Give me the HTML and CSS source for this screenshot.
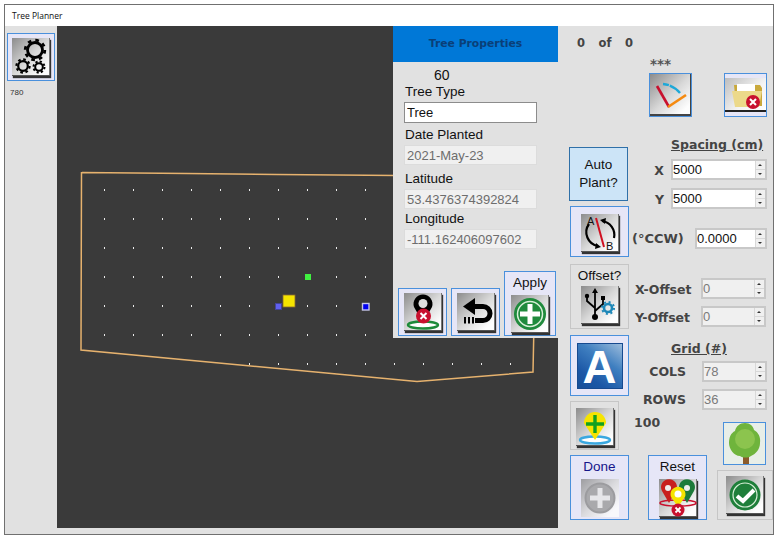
FILE: index.html
```html
<!DOCTYPE html>
<html lang="en">
<head>
<meta charset="utf-8">
<title>Tree Planner</title>
<link rel="stylesheet" href="styles.css">
</head>
<body>
<div class="window">
  <div class="titlebar">Tree Planner</div>
  <div class="main">
    <aside class="sidebar">
      <button class="btn btn-blue btn-gear"><span class="bevel">
        <svg viewBox="0 0 38 38"><g fill="none" stroke="#000"><circle cx="23" cy="12" r="7.500" stroke-width="2.800"/><circle cx="23" cy="12" r="9.800" stroke-width="2.800" stroke-dasharray="3.600 4.100"/><circle cx="11" cy="28" r="4.800" stroke-width="2.200"/><circle cx="11" cy="28" r="6.600" stroke-width="2.200" stroke-dasharray="2.600 2.580"/><circle cx="27" cy="29" r="3.800" stroke-width="2"/><circle cx="27" cy="29" r="5.500" stroke-width="2" stroke-dasharray="2.200 2.120"/></g></svg>
      </span></button>
      <div class="count">780</div>
    </aside>

    <section class="canvas">
      <svg class="map" viewBox="0 0 501 502">
        <polyline class="boundary" points="25,146.500 130,147.500 220,148.500 400,150 480,151 476,346 476,346 360,355.500 24,324 24.500,146"/>
        <g class="trees">
          <path d="M47 164h1M76 164h1M105 164h1M134 164h1M163 164h1M192 164h1M221 164h1M250 164h1M279 164h1M308 164h1"/>
          <path d="M47 193h1M76 193h1M105 193h1M134 193h1M163 193h1M192 193h1M221 193h1M250 193h1M279 193h1M308 193h1"/>
          <path d="M47 222h1M76 222h1M105 222h1M134 222h1M163 222h1M192 222h1M221 222h1M250 222h1M279 222h1M308 222h1"/>
          <path d="M47 251h1M76 251h1M105 251h1M134 251h1M163 251h1M192 251h1M221 251h1M279 251h1M308 251h1"/>
          <path d="M47 280h1M76 280h1M105 280h1M134 280h1M163 280h1M192 280h1M250 280h1M279 280h1"/>
          <path d="M47 309h1M76 309h1M105 309h1M134 309h1M163 309h1M192 309h1M221 309h1M250 309h1M279 309h1M308 309h1"/>
          <path d="M192 338h1M221 338h1M250 338h1M279 338h1M308 338h1M337 338h1M366 338h1M395 338h1M424 338h1M453 338h1"/>
        </g>
        <rect x="226" y="269" width="12" height="12" fill="#f5e400" stroke="#8a6a30" stroke-width=".8"/>
        <rect x="218.500" y="277.500" width="6" height="6" fill="#6060f0" stroke="#44449a"/>
        <rect x="248" y="248" width="6" height="6" fill="#40f040"/>
        <rect x="305.500" y="277.500" width="6.500" height="6.500" fill="#0000f0" stroke="#c4c4e8" stroke-width="1.400"/>
      </svg>

      <div class="props">
        <h2 class="props-head">Tree Properties</h2>
        <div class="props-num">60</div>
        <label class="lbl lbl-type">Tree Type</label>
        <input class="txt" value="Tree">
        <label class="lbl lbl-date">Date Planted</label>
        <input class="txt off" value="2021-May-23" disabled>
        <label class="lbl lbl-lat">Latitude</label>
        <input class="txt off" value="53.4376374392824" disabled>
        <label class="lbl lbl-lon">Longitude</label>
        <input class="txt off" value="-111.162406097602" disabled>
        <div class="props-actions">
          <button class="btn btn-blue btn-49"><span class="bevel">
            <svg viewBox="0 0 38 38"><ellipse cx="19" cy="32" rx="15" ry="3.500" fill="#fff" stroke="#1d8a3a" stroke-width="2.400"/><path d="M19 30 10 14a9.500 9.500 0 1 1 18 0z" fill="#000"/><circle cx="19" cy="10.500" r="4.500" fill="#ddd"/><circle cx="19.500" cy="23" r="7.500" fill="#c8102e"/><path d="m16.500 20 6 6m0-6-6 6" stroke="#fff" stroke-width="2"/></svg>
          </span></button>
          <button class="btn btn-blue btn-49"><span class="bevel">
            <svg viewBox="0 0 38 38"><path d="M16 13.500h10a7 7 0 0 1 0 14H18" fill="none" stroke="#000" stroke-width="5"/><path d="M6 13.500 18 5v17z" fill="#000"/><path d="M7 24h2v6.500H7zM11 24h2v6.500h-2zM15 24h2v6.500h-2z" fill="#000"/></svg>
          </span></button>
          <button class="btn btn-blue btn-apply"><span class="cap">Apply</span><span class="bevel">
            <svg viewBox="0 0 38 38"><circle cx="19" cy="19" r="16" fill="#1f8a3c"/><circle cx="19" cy="19" r="12.500" fill="none" stroke="#d8efd8" stroke-width="1.500"/><path d="M19 9v20M9 19h20" stroke="#fff" stroke-width="5"/></svg>
          </span></button>
        </div>
      </div>
    </section>

    <section class="panel">
      <div class="col-btns">
        <div class="counter"><span>0</span><span class="of">of</span><span>0</span></div>
        <button class="btn btn-auto">Auto<br>Plant?</button>
        <button class="btn btn-blue btn-ab"><span class="bevel">
          <svg viewBox="0 0 38 38"><path d="M15 4 23 33" stroke="#d01020" stroke-width="2"/><path d="M21 7a14 14 0 0 1 12 17" fill="none" stroke="#000" stroke-width="2.200"/><path d="M8 10a14 14 0 0 0 9 22" fill="none" stroke="#000" stroke-width="2.200"/><path d="m19 6 6-2-1 6zM20 33l-6 2 1-6z" fill="#000"/><text class="ab" x="6" y="11">A</text><text class="ab" x="25" y="36">B</text></svg>
        </span></button>
        <button class="btn btn-plain btn-offset"><span class="cap">Offset?</span><span class="bevel">
          <svg viewBox="0 0 38 38"><path d="M14 6v24M14 22 6 15V11M14 25l8-7v-5" fill="none" stroke="#000" stroke-width="1.800"/><path d="m14 2 3 5h-6z" fill="#000"/><circle cx="6" cy="10" r="2.200"/><rect x="20" y="10" width="4" height="4"/><circle cx="14" cy="31" r="3"/><circle cx="27" cy="22" r="4" fill="none" stroke="#1e88b8" stroke-width="2.600"/><circle cx="27" cy="22" r="6" fill="none" stroke="#1e88b8" stroke-width="2" stroke-dasharray="2 2.700"/></svg>
        </span></button>
        <button class="btn btn-blue btn-a"><span class="tile-a">A</span></button>
        <button class="btn btn-plain btn-add"><span class="bevel">
          <svg viewBox="0 0 38 38"><ellipse cx="19" cy="32" rx="15" ry="3.500" fill="#fff" stroke="#3aa8e0" stroke-width="2.400"/><path d="M19 32 8 15a11 11 0 1 1 22 0z" fill="#f5e400"/><path d="M19 7v18M10 16h18" stroke="#10a020" stroke-width="3.400"/></svg>
        </span></button>
        <button class="btn btn-blue btn-done"><span class="cap cap-done">Done</span><span class="bevel bevel-off">
          <svg viewBox="0 0 38 38"><circle cx="19" cy="19" r="14.500" fill="#9a9a9a" stroke="#8a8a8a" stroke-width="2"/><path d="M19 9v20M9 19h20" stroke="#e6e6e6" stroke-width="5"/></svg>
        </span></button>
      </div>

      <div class="col-fields">
        <div class="stars">***</div>
        <div class="top-btns">
          <button class="btn btn-blue btn-43"><span class="bevel bevel-fill">
            <svg viewBox="0 0 41 42"><path d="M7 12 19 33" stroke="#c8102e" stroke-width="2.600"/><path d="M18 33 36 21" stroke="#f58a10" stroke-width="2.600"/><path d="M13 10a24 24 0 0 1 17 9" fill="none" stroke="#1ea8d8" stroke-width="2.400" stroke-dasharray="6 1 14"/></svg>
          </span></button>
          <button class="btn btn-blue btn-43 btn-folder"><span class="folder-wrap">
            <svg viewBox="0 0 41 32"><path d="M9 7h26l2 3v18H11z" fill="#c9a93c"/><path d="M12 6h18v7H12z" fill="#fff"/><path d="M7 13h30l-3 16H10z" fill="#ecd98a"/><circle cx="28" cy="24" r="7" fill="#c8102e"/><path d="m25 21 6 6m0-6-6 6" stroke="#fff" stroke-width="2"/></svg>
          </span></button>
        </div>

        <div class="heading heading-spacing">Spacing (cm)</div>
        <div class="field field-x"><span class="name name-xy">X</span><div class="spin spin-96"><input value="5000"><span class="arrows"><i></i><b></b></span></div></div>
        <div class="field field-y"><span class="name name-xy">Y</span><div class="spin spin-96"><input value="5000"><span class="arrows"><i></i><b></b></span></div></div>
        <div class="field field-ccw"><span class="name name-ccw">(°CCW)</span><div class="spin spin-72"><input value="0.0000"><span class="arrows"><i></i><b></b></span></div></div>
        <div class="field field-xo"><span class="name name-off">X-Offset</span><div class="spin spin-65 off"><input value="0" disabled><span class="arrows"><i></i><b></b></span></div></div>
        <div class="field field-yo"><span class="name name-off">Y-Offset</span><div class="spin spin-65 off"><input value="0" disabled><span class="arrows"><i></i><b></b></span></div></div>
        <div class="heading heading-grid">Grid (#)</div>
        <div class="field field-cols"><span class="name name-grid">COLS</span><div class="spin spin-65 off"><input value="78" disabled><span class="arrows"><i></i><b></b></span></div></div>
        <div class="field field-rows"><span class="name name-grid">ROWS</span><div class="spin spin-65 off"><input value="36" disabled><span class="arrows"><i></i><b></b></span></div></div>

        <div class="bottom">
          <div class="bottom-l">
            <div class="hundred">100</div>
            <button class="btn btn-blue btn-reset"><span class="cap">Reset</span><span class="bevel">
              <svg viewBox="0 0 38 38"><ellipse cx="19" cy="24" rx="18" ry="3" fill="none" stroke="#c8102e" stroke-width="1.500"/><path d="M10 24 3 12a8 8 0 1 1 14 0z" fill="#c8201e"/><path d="M28 24 21 12a8 8 0 1 1 14 0z" fill="#1d7a3a"/><circle cx="9" cy="9" r="3" fill="#eee"/><circle cx="28" cy="9" r="3" fill="#eee"/><path d="M19 28 12 18a7.500 7.500 0 1 1 14 0z" fill="#f5e400"/><circle cx="19" cy="15" r="3.500" fill="#fff"/><circle cx="19" cy="31" r="6.500" fill="#c8102e"/><path d="m16.500 28.500 5 5m0-5-5 5" stroke="#fff" stroke-width="1.800"/></svg>
            </span></button>
          </div>
          <div class="bottom-r">
            <button class="btn btn-blue btn-tree">
              <svg viewBox="0 0 41 41"><rect x="19" y="33" width="6" height="8" fill="#8a5a2a"/><path d="M21 0c5 0 8 3 9 7 4 2 7 7 6 13 0 6-4 11-9 13-3 2-8 2-11 0-6 0-11-7-11-13 0-6 2-10 6-12 1-5 5-8 10-8z" fill="#6fb43c"/><circle cx="21" cy="16" r="10" fill="#8cc44e"/></svg>
            </button>
            <button class="btn btn-plain btn-check"><span class="bevel">
              <svg viewBox="0 0 38 38"><circle cx="19" cy="19" r="15.500" fill="#1f7f3a"/><circle cx="19" cy="19" r="12" fill="none" stroke="#d8efd8" stroke-width="1.200"/><path d="m11 20 6 5 11-11" fill="none" stroke="#fff" stroke-width="4"/></svg>
            </span></button>
          </div>
        </div>
      </div>
    </section>
  </div>
</div>
</body>
</html>
```
FILE: styles.css
```css
* { box-sizing: border-box; }
html, body { margin: 0; padding: 0; background: #fff; }
body { width: 779px; height: 541px; overflow: hidden; font-family: "Liberation Sans", Arial, sans-serif; }

.window { margin: 4px 0 0 4px; width: 770px; height: 531px; border: 1px solid #707070; background: #e1e1e1; display: flex; flex-direction: column; }
.titlebar { height: 21px; background: #fff; font: 8.5px/21px "Open Sans", sans-serif; padding-left: 7px; color: #111; }
.main { flex: 1; display: flex; min-height: 0; }

.sidebar { width: 52px; padding: 7px 0 0 2px; flex: none; }
.count { font-size: 8px; margin: 7px 0 0 3px; color: #333; }

.btn { display: flex; flex-direction: column; align-items: center; justify-content: flex-end; padding: 0; margin: 0; font: 13.5px "Liberation Sans", Arial, sans-serif; color: #111; background: #e1e1e1; border: 1px solid #c8c8c8; }
.btn-blue { background: #e6e6f7; border-color: #4a90dc; }
.btn-plain { background: #e1e1e1; border-color: #c6c6c6; }
.bevel { display: block; width: 38px; height: 38px; flex: none; background: linear-gradient(135deg, #8c8c8c 0%, #d8d8d8 50%, #fdfdfd 85%); box-shadow: inset 0 -1px 0 #555, inset -1px 0 0 #777, 1px 2px 1px #333; }
.bevel svg { display: block; width: 38px; height: 38px; overflow: visible; }
.bevel-off { opacity: .8; box-shadow: none; }
.cap { display: block; line-height: 16px; }
.cap-done { color: #15158a; }
.ab { font: 11px "Liberation Sans", Arial, sans-serif; fill: #111; }

.btn-gear { width: 48px; height: 48px; justify-content: center; }

.canvas { position: relative; width: 501px; height: 502px; background: #3a3a3a; flex: none; }
.map { display: block; width: 501px; height: 502px; }
.boundary { fill: none; stroke: #e6b26e; stroke-width: 1.500; }
.trees path { stroke: #ececec; stroke-width: 2.200; fill: none; }

.props { position: absolute; left: 336px; top: 0; width: 165px; height: 312px; background: #e1e1e1; }
.props-head { margin: 0; height: 36px; background: #0078d7; color: #0a3f78; font: bold 10.8px/36px "DejaVu Sans", sans-serif; text-align: center; }
.props-num { font-size: 14px; line-height: 16px; margin: 5px 0 0 41px; color: #111; }
.lbl { display: block; font-size: 13.5px; line-height: 16px; color: #111; margin-left: 12px; }
.lbl-type { margin-top: 1px; }
.lbl-date { margin-top: 4px; }
.lbl-lat { margin-top: 6px; }
.lbl-lon { margin-top: 2px; }
.txt { display: block; width: 133px; height: 21px; margin: 2px 0 0 11px; padding: 0 2px; border: 1px solid #8c8c8c; background: #fff; font: 13px "Liberation Sans", Arial, sans-serif; color: #111; border-radius: 0; outline: 0; }
.txt.off { height: 20px; background: #f0f0f0; border-color: #dcdcdc; color: #6d6d6d; }
.props-actions { position: absolute; left: 5px; bottom: 2px; display: flex; align-items: flex-end; gap: 4px; }
.btn-49 { width: 49px; height: 48px; justify-content: center; }
.btn-apply { width: 52px; height: 65px; padding-bottom: 2px; }
.btn-apply .cap { margin-bottom: 4px; }

.panel { flex: 1; display: flex; padding-left: 11px; min-width: 0; }
.col-btns { width: 60px; flex: none; display: flex; flex-direction: column; align-items: flex-start; }
.counter { margin: 10px 0 0 8px; width: 56px; display: flex; justify-content: space-between; font: bold 11.5px/14px "DejaVu Sans", sans-serif; color: #444; }
.of { margin: 0 3px; }
.btn-auto { width: 59px; height: 54px; margin-top: 97px; background: #cce4f7; border-color: #2f70a8; justify-content: center; line-height: 18px; }
.btn-ab { width: 59px; height: 51px; margin: 5px 0 0 1px; justify-content: center; padding-top: 2px; }
.btn-offset { width: 59px; height: 65px; margin: 7px 0 0 1px; padding-bottom: 4px; }
.btn-offset .cap { margin-bottom: 2px; }
.btn-a { width: 59px; height: 61px; margin: 6px 0 0 1px; justify-content: center; }
.tile-a { display: block; width: 46px; height: 46px; background: linear-gradient(215deg, #9dbcdc 0%, #3f7fc0 38%, #1b57a6 75%, #174f98 100%); border: 1px solid #174a90; color: #fff; font: bold 47px/46px "Liberation Sans", sans-serif; text-align: center; }
.btn-add { width: 49px; height: 49px; margin: 5px 0 0 1px; justify-content: center; padding-top: 2px; }
.btn-done { width: 59px; height: 65px; margin: 5px 0 0 1px; padding-bottom: 2px; }
.btn-done .cap { margin-bottom: 4px; }

.col-fields { width: 141px; margin-left: 3px; flex: none; display: flex; flex-direction: column; }
.stars { margin: 31px 0 0 18px; font: bold 13.5px/14px "DejaVu Sans", sans-serif; color: #555; height: 10px; }
.top-btns { display: flex; margin: 6px 0 0 17px; gap: 32px; }
.btn-43 { width: 43px; height: 44px; justify-content: center; }
.bevel.bevel-fill { box-shadow: inset -1px -2px 0 #444; width: 41px; height: 42px; }
.bevel-fill svg { width: 41px; height: 42px; }
.btn-folder { justify-content: center; }
.folder-wrap { display: block; width: 41px; height: 34px; background: linear-gradient(135deg, #bdbdbd 0%, #f4f4f4 60%, #fff 100%); border-bottom: 2px solid #222; }
.folder-wrap svg { display: block; width: 41px; height: 32px; }

.heading { font: bold 12.5px/14px "DejaVu Sans", sans-serif; color: #444; text-decoration: underline; margin-left: 39px; }
.heading-spacing { margin-top: 21px; }
.heading-grid { margin-top: 15px; }

.field { display: flex; align-items: center; }
.field-x { margin-top: 7px; }
.field-y { margin-top: 8px; }
.field-ccw { margin-top: 19px; }
.field-xo { margin-top: 29px; }
.field-yo { margin-top: 7px; }
.field-cols { margin-top: 5px; }
.field-rows { margin-top: 7px; }
.name { font: bold 12.5px/14px "DejaVu Sans", sans-serif; color: #444; white-space: nowrap; }
.name-xy { width: 32px; margin-right: 7px; text-align: right; padding-top: 3px; }
.name-ccw { width: 63px; font-size: 13px; }
.name-off { width: 69px; padding-left: 3px; padding-top: 3px; }
.name-grid { width: 54px; margin-right: 16px; text-align: right; }

.spin { display: flex; height: 21px; background: #fff; border: 2px solid #c8c8c8; padding: 0; }
.spin-96 { width: 96px; }
.spin-72 { width: 72px; }
.spin-65 { width: 65px; }
.spin input { flex: 1; width: 0; min-width: 0; border: 0; padding: 0; margin: 0; background: transparent; font: 13px "Liberation Sans", Arial, sans-serif; color: #111; outline: 0; }
.spin.off { background: #f0f0f0; }
.spin.off input { color: #7a7a7a; }
.arrows { width: 10px; display: flex; flex-direction: column; background: #f0f0f0; flex: none; }
.arrows i, .arrows b { display: block; flex: 1; position: relative; background: #f0f0f0; border-left: 1px solid #d8d8d8; }
.arrows b { border-top: 1px solid #d8d8d8; }
.arrows i::after, .arrows b::after { content: ""; position: absolute; left: 2px; top: 3px; border: 2px solid transparent; border-top: 0; border-bottom: 2px solid #333; }
.arrows b::after { border-bottom: 0; border-top: 2px solid #333; }

.bottom { display: flex; margin-top: 0; }
.bottom-l { width: 85px; flex: none; display: flex; flex-direction: column; }
.hundred { font: bold 12.5px/14px "DejaVu Sans", sans-serif; color: #444; margin: 6px 0 0 2px; }
.btn-reset { width: 59px; height: 65px; margin: 25px 0 0 16px; padding-bottom: 2px; }
.btn-reset .cap { margin-bottom: 4px; }
.bottom-r { width: 56px; flex: none; display: flex; flex-direction: column; }
.btn-tree { width: 43px; height: 43px; margin: 12px 0 0 6px; background: #e8eee8; justify-content: center; }
.btn-tree svg { display: block; width: 41px; height: 41px; }
.btn-check { width: 56px; height: 50px; margin-top: 5px; justify-content: center; }
```
